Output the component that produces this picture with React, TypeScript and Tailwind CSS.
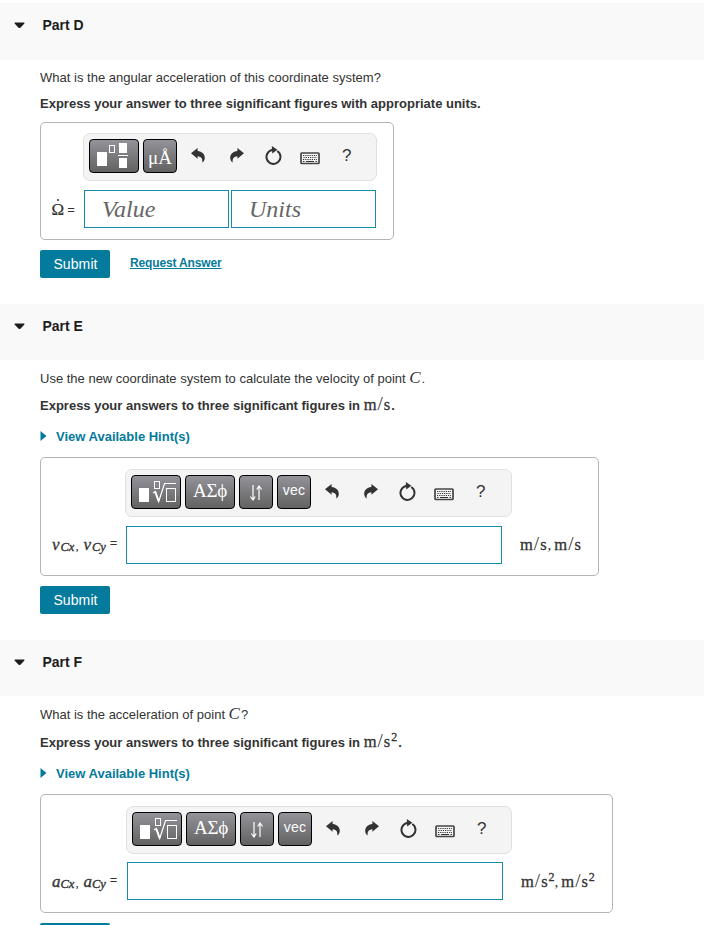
import React from "react";

const math = "font-['Liberation_Serif',serif]";

function PartHeader({ title, first }: { title: string; first?: boolean }) {
  return (
    <header className={`flex bg-[#f9f9f9] pl-[14px] ${first ? "h-[57px] pt-[14px]" : "h-14 pt-[14px]"}`}>
      <svg className="mt-[5px] h-[7px] w-[11px]" viewBox="0 0 11 7" fill="#1c1c1c">
        <path d="M1 0.5H10Q11 0.8 10.2 1.8L6.4 5.7Q5.5 6.5 4.6 5.7L0.8 1.8Q0 0.8 1 0.5Z" />
      </svg>
      <h2 className="ml-[17.5px] text-[14px] leading-4 font-bold text-[#1c1c1c]">{title}</h2>
    </header>
  );
}

function ToolButton({ wide, children }: { wide?: boolean; children: React.ReactNode }) {
  return (
    <button
      className={`flex h-[34px] shrink-0 items-center justify-center rounded-[4px] border border-black bg-linear-to-b from-[#94939a] to-[#626262] text-white ${wide ? "w-[50px]" : "w-[34px]"}`}
    >
      {children}
    </button>
  );
}

function UndoArrow({ className }: { className: string }) {
  return (
    <svg className={className} width="14" height="15" viewBox="0 0 14 15" fill="#333">
      <path d="M0 5.2 6.6 0V3C11 3.3 14 6.5 13.8 10C13.7 12.2 12.8 13.6 11.2 14.6C11.8 11.4 10.8 8.6 6.6 8.3V10.8Z" />
    </svg>
  );
}

function Tools() {
  return (
    <div className="flex h-8 items-start">
      <UndoArrow className="ml-[10px] mt-[9px]" />
      <UndoArrow className="ml-[25px] mt-[9px] -scale-x-100" />
      <svg className="ml-[20.5px] mt-[7px]" width="17" height="19" viewBox="0 0 17 19" fill="none">
        <path d="M12.3 5A7 7 0 1 1 7.2 4" stroke="#333" strokeWidth="2" />
        <path d="M6.8 0 12.4 3.8 7.2 7.4Z" fill="#333" />
      </svg>
      <svg className="ml-[18.5px] mt-[13px]" width="20" height="13" viewBox="0 0 20 13" fill="none">
        <rect x="1" y="1" width="18" height="10.5" rx="0.8" stroke="#444" strokeWidth="1.7" />
        <path d="M3 3.5H17M3.5 5.5H17M3 7.5H17" stroke="#333" strokeWidth="1.1" strokeDasharray="1.2 1" />
        <path d="M3 9.5H4.5M6 9.5H14M15.5 9.5H17" stroke="#333" strokeWidth="1.1" />
      </svg>
      <span className="ml-[22px] mt-[7px] text-[17px] leading-5 text-[#333]">?</span>
    </div>
  );
}

function Toolbar({ width, children }: { width: string; children: React.ReactNode }) {
  return (
    <div className={`flex h-12 gap-1 rounded-[7px] border border-[#e0e0e0] bg-[#f4f4f4] pl-[5px] pt-[5px] ${width}`}>
      {children}
      <Tools />
    </div>
  );
}

function SymbolButtons() {
  return (
    <>
      <ToolButton wide>
        <svg width="48" height="32" viewBox="0 0 48 32" fill="none">
          <rect x="7" y="12" width="10" height="14" fill="white" />
          <rect x="22.5" y="5.5" width="5" height="7" stroke="white" />
          <path d="M21 17 23.3 15.5 26.7 25.5 32.5 7.5H44" stroke="white" strokeWidth="1.2" />
          <path d="M23.3 16 26.6 25" stroke="white" strokeWidth="2" />
          <rect x="34.5" y="12.5" width="9" height="13" stroke="white" />
        </svg>
      </ToolButton>
      <ToolButton wide>
        <span className={`-mt-[2px] text-[19px] leading-5 tracking-[-0.2px] ${math}`}>ΑΣϕ</span>
      </ToolButton>
      <ToolButton>
        <svg width="32" height="32" viewBox="0 0 32 32" fill="none" stroke="white" strokeWidth="1.2">
          <path d="M13 9V23.5M10.3 20.5 13 24 15.2 20.5M19 24V10M16.7 13.5 19 10 21.7 13.5" />
        </svg>
      </ToolButton>
      <ToolButton>
        <span className="-mt-[3px] text-[14px] tracking-[0.2px]">vec</span>
      </ToolButton>
    </>
  );
}

function Submit() {
  return (
    <button className="h-7 w-[70px] rounded-[2px] bg-[#047a9c] pl-px text-[14px] leading-7 tracking-[0.1px] text-white">
      Submit
    </button>
  );
}

function Hint({ className }: { className: string }) {
  return (
    <div className={`flex h-4 items-center text-[13px] font-bold text-[#047a9c] ${className}`}>
      <svg className="-mt-[2px]" width="7" height="10" viewBox="0 0 7 10" fill="#047a9c">
        <path d="M0.5 0 6.5 5 0.5 10Z" />
      </svg>
      <span className="ml-[9px]">View Available Hint(s)</span>
    </div>
  );
}

function Vector({ letter }: { letter: string }) {
  const component = (axis: string) => (
    <span className="inline-flex items-baseline">
      <i className="inline-block w-[8.5px] text-[17px] [-webkit-text-stroke:0.3px_#333]">{letter}</i>
      <i className="relative top-[1px] text-[12.5px] [-webkit-text-stroke:0.35px_#333]">C{axis}</i>
    </span>
  );
  return (
    <span className={`flex items-baseline whitespace-nowrap text-[#333] ${math}`}>
      {component("x")}
      <span className="w-[9px] pl-px text-[13px]">,</span>
      {component("y")}
    </span>
  );
}

function Rate({ squared }: { squared?: boolean }) {
  return (
    <span className={`text-[16.5px] leading-none font-normal tracking-[1px] [-webkit-text-stroke:0.3px_#333] ${math}`}>
      m<span className="text-[19px] leading-none [-webkit-text-stroke:0]">/</span>s
      {squared && <span className="relative -top-[6px] text-[12px] leading-none tracking-normal">2</span>}
    </span>
  );
}

function AnswerBox({ letter, squared }: { letter: string; squared?: boolean }) {
  return (
    <div
      className={`mt-[12px] flex h-[119px] rounded-[5px] border border-[#b5b5b5] pt-[11px] ${squared ? "w-[573px]" : "w-[559px]"}`}
    >
      <div className={`flex shrink-0 items-start pl-[11px] pt-[63px] ${squared ? "w-[85px]" : "w-[84px]"}`}>
        <Vector letter={letter} />
        <span className="ml-1 mt-px text-[13px]">=</span>
      </div>
      <div className="shrink-0">
        <Toolbar width={squared ? "w-[386px]" : "w-[387px]"}>
          <SymbolButtons />
        </Toolbar>
        <div className={`ml-px h-[38px] w-[376px] border border-[#178aaa] ${squared ? "mt-[8px]" : "mt-[9px]"}`} />
      </div>
      <div className={`mt-[65px] whitespace-nowrap leading-5 ${squared ? "ml-[9px]" : "ml-2"}`}>
        <Rate squared={squared} />
        <span className={`mr-[3px] text-[15px] ${math}`}>,</span>
        <Rate squared={squared} />
      </div>
    </div>
  );
}

export default function App() {
  return (
    <main className="h-[925px] w-[704px] overflow-hidden bg-white pt-[3px] font-['Liberation_Sans',Arial,sans-serif] text-[13px] text-[#333]">
      <section className="h-[301px]">
        <PartHeader title="Part D" first />
        <div className="pl-10">
          <p className="mt-[10px] leading-4 tracking-[0.01px]">What is the angular acceleration of this coordinate system?</p>
          <p className="mt-[10px] font-bold leading-4">
            Express your answer to three significant figures with appropriate units.
          </p>
          <div className="mt-[10px] flex h-[118px] w-[354px] rounded-[5px] border border-[#b5b5b5] pt-[10px]">
            <div className="flex w-[42px] shrink-0 items-start pl-[10.5px] pt-[65px]">
              <span className={`relative text-[17px] leading-6 [-webkit-text-stroke:0.2px_#333] ${math}`}>
                Ω
                <span className="absolute top-[1px] left-[5.5px] h-[2px] w-[2px] rounded-full bg-[#333]" />
              </span>
              <span className="ml-[3px] mt-[2px] text-[13px]">=</span>
            </div>
            <div>
              <Toolbar width="w-[294px]">
                <ToolButton wide>
                  <svg width="48" height="32" viewBox="0 0 48 32" fill="none">
                    <rect x="7" y="12" width="10" height="14" fill="white" />
                    <rect x="19.5" y="5.5" width="5" height="7" stroke="white" />
                    <path d="M29 3H37V13H29ZM29 18H37V28H29ZM28 15H38V16H28Z" fill="white" />
                  </svg>
                </ToolButton>
                <ToolButton>
                  <span className={`mt-[3px] text-[19px] leading-5 ${math}`}>μÅ</span>
                </ToolButton>
              </Toolbar>
              <div className={`ml-[1px] mt-[9px] flex gap-[2px] text-[24px] italic text-[#666] ${math}`}>
                <div className="h-[38px] w-[145px] border border-[#178aaa] pl-[17px] leading-9">Value</div>
                <div className="h-[38px] w-[145px] border border-[#178aaa] pl-[17px] leading-9">Units</div>
              </div>
            </div>
          </div>
          <div className="mt-[10px] flex">
            <Submit />
            <a className="ml-5 mt-[5px] text-[12px] leading-4 font-bold tracking-[-0.15px] text-[#047a9c] underline">
              Request Answer
            </a>
          </div>
        </div>
      </section>

      <section className="h-[336px]">
        <PartHeader title="Part E" />
        <div className="pl-10">
          <p className="mt-[9px] h-4 leading-4">
            Use the new coordinate system to calculate the velocity of point{" "}
            <i className={`text-[17px] leading-none ${math}`}>C</i>
            <span className="ml-px">.</span>
          </p>
          <p className="mt-[9px] h-4 font-bold leading-4">
            Express your answers to three significant figures in <Rate />.
          </p>
          <Hint className="mt-[19px]" />
          <AnswerBox letter="v" />
          <div className="mt-[10px]">
            <Submit />
          </div>
        </div>
      </section>

      <section>
        <PartHeader title="Part F" />
        <div className="pl-10">
          <p className="mt-[9px] h-4 leading-4">
            What is the acceleration of point <i className={`text-[17px] leading-none ${math}`}>C</i>
            <span className="ml-px">?</span>
          </p>
          <p className="mt-[10px] h-4 font-bold leading-4">
            Express your answers to three significant figures in <Rate squared />
            <span className="ml-px">.</span>
          </p>
          <Hint className="mt-[19px]" />
          <AnswerBox letter="a" squared />
          <button aria-label="Submit" className="mt-[10px] block h-7 w-[70px] rounded-[2px] bg-[#047a9c]" />
        </div>
      </section>
    </main>
  );
}
